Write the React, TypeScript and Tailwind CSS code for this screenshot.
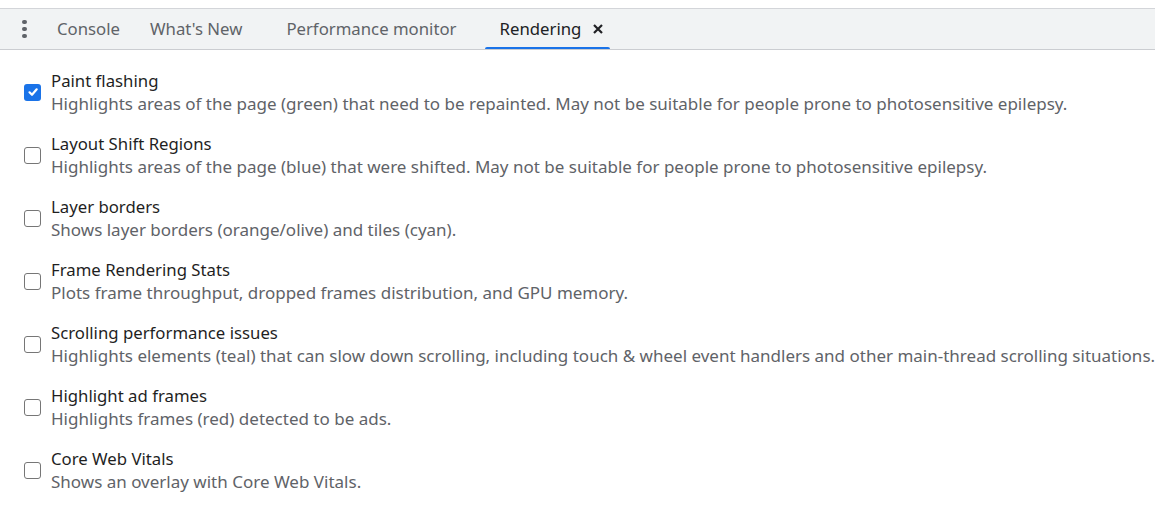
import React, { useState } from 'react';

interface Option {
  id: string;
  title: string;
  description: string;
  checked: boolean;
}

const initialOptions: Option[] = [
  {
    id: 'paint',
    title: 'Paint flashing',
    description:
      'Highlights areas of the page (green) that need to be repainted. May not be suitable for people prone to photosensitive epilepsy.',
    checked: true,
  },
  {
    id: 'layout',
    title: 'Layout Shift Regions',
    description:
      'Highlights areas of the page (blue) that were shifted. May not be suitable for people prone to photosensitive epilepsy.',
    checked: false,
  },
  {
    id: 'borders',
    title: 'Layer borders',
    description: 'Shows layer borders (orange/olive) and tiles (cyan).',
    checked: false,
  },
  {
    id: 'frames',
    title: 'Frame Rendering Stats',
    description: 'Plots frame throughput, dropped frames distribution, and GPU memory.',
    checked: false,
  },
  {
    id: 'scrolling',
    title: 'Scrolling performance issues',
    description:
      'Highlights elements (teal) that can slow down scrolling, including touch & wheel event handlers and other main-thread scrolling situations.',
    checked: false,
  },
  {
    id: 'ads',
    title: 'Highlight ad frames',
    description: 'Highlights frames (red) detected to be ads.',
    checked: false,
  },
  {
    id: 'vitals',
    title: 'Core Web Vitals',
    description: 'Shows an overlay with Core Web Vitals.',
    checked: false,
  },
];

const App: React.FC = () => {
  const [options, setOptions] = useState<Option[]>(initialOptions);

  const toggle = (id: string) => {
    setOptions(options.map(o => (o.id === id ? { ...o, checked: !o.checked } : o)));
  };

  return (
    <div
      className="w-[1155px] h-[511px] overflow-hidden bg-white"
      style={{ fontFamily: '"Noto Sans", "Open Sans", sans-serif' }}
    >
      <div className="h-[9px] bg-white border-b border-[#d3d5d9]" />
      {/* tab strip */}
      <div className="flex items-stretch h-[41px] bg-[#f1f3f4] border-b border-[#cbcdd1] text-[16.75px]">
        <button className="w-[42px] flex flex-col items-start justify-center gap-[2.5px] pl-[22px]">
          <span className="w-[4.5px] h-[4.5px] rounded-full bg-[#5f6368]" />
          <span className="w-[4.5px] h-[4.5px] rounded-full bg-[#5f6368]" />
          <span className="w-[4.5px] h-[4.5px] rounded-full bg-[#5f6368]" />
        </button>
        <div className="flex items-center px-[15px] text-[#5f6368]">Console</div>
        <div className="flex items-center pl-[15px] pr-[29px] text-[#5f6368]">What's New</div>
        <div className="flex items-center pl-[15px] pr-[28px] text-[#5f6368]">Performance monitor</div>
        <div className="relative flex items-center pl-[15px] pr-[6px] text-[#202124]">
          <span>Rendering</span>
          <svg viewBox="0 0 12 12" className="w-[12px] h-[12px] ml-[11px]" fill="none" stroke="#202124" strokeWidth="2.2">
            <path d="M2 2 L10 10 M10 2 L2 10" />
          </svg>
          <span className="absolute left-0 right-0 bottom-0 h-[2px] bg-[#1a73e8] rounded-t" />
        </div>
      </div>

      {/* options */}
      <div className="pt-[19px] pl-[24px] flex flex-col gap-[17px]">
        {options.map(o => (
          <label key={o.id} className="flex items-center gap-[10px] cursor-pointer">
            <span
              onClick={() => toggle(o.id)}
              className={
                o.checked
                  ? 'w-[17px] h-[17px] rounded-[3px] bg-[#1a73e8] flex items-center justify-center shrink-0'
                  : 'w-[17px] h-[17px] rounded-[3px] border-[1.5px] border-[#767676] bg-white shrink-0'
              }
            >
              {o.checked && (
                <svg viewBox="0 0 12 12" className="w-[12px] h-[12px]" fill="none" stroke="white" strokeWidth="2.2" strokeLinecap="round" strokeLinejoin="round">
                  <path d="M2.5 6.3 L5 8.8 L9.7 3.3" />
                </svg>
              )}
            </span>
            <div className="flex flex-col leading-[23px]">
              <span className="text-[16.75px] text-[#1f1f1f]">{o.title}</span>
              <span className="text-[17px] text-[#5f6368] whitespace-nowrap">{o.description}</span>
            </div>
          </label>
        ))}
      </div>
    </div>
  );
};

export default App;
